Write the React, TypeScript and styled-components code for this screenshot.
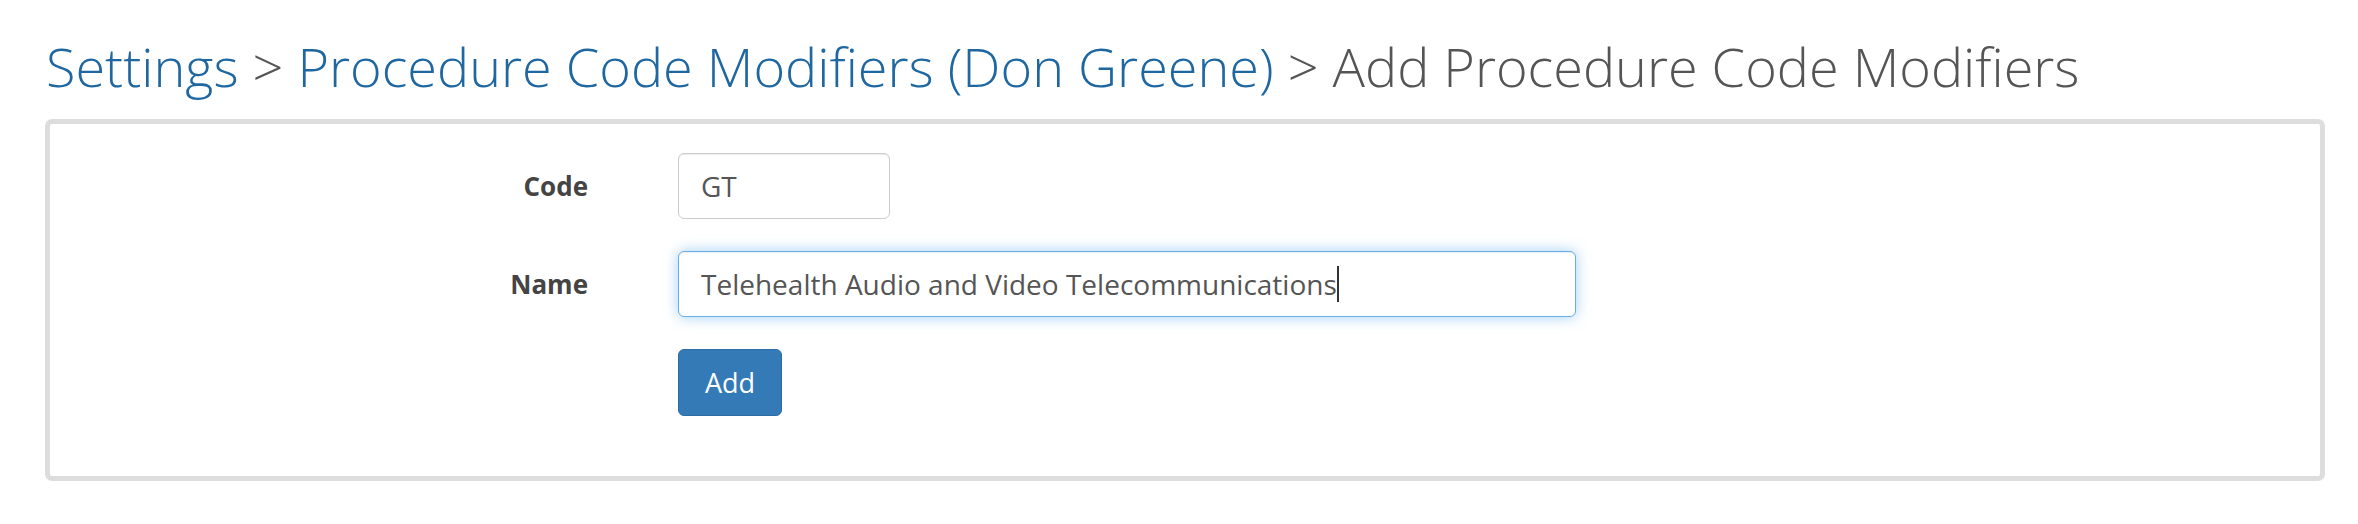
import React from 'react';
import styled, { createGlobalStyle } from 'styled-components';

const GlobalStyle = createGlobalStyle`
  html, body {
    margin: 0;
    padding: 0;
    background: #ffffff;
  }
  body {
    font-family: 'Open Sans', 'Liberation Sans', sans-serif;
    color: #444444;
  }
`;

const Page = styled.div`
  box-sizing: border-box;
  width: 2358px;
  padding: 0 33px 0 45px;
`;

const Title = styled.h1`
  margin: 36px 0 23px 1px;
  font-size: 54px;
  line-height: 60px;
  font-weight: 300;
  color: #555555;
  white-space: nowrap;
`;

const Crumb = styled.a`
  color: #1f67a0;
  text-decoration: none;
  cursor: pointer;
`;

const Panel = styled.div`
  box-sizing: border-box;
  border: 5px solid #dddddd;
  border-radius: 7px;
  padding: 29px 0 60px;
`;

const Form = styled.form`
  display: grid;
  grid-template-columns: 538px 1fr;
  column-gap: 90px;
  row-gap: 32px;
  align-items: center;
  margin: 0;
`;

const Label = styled.label`
  text-align: right;
  font-size: 26px;
  font-weight: 700;
  color: #444444;
  line-height: 1;
`;

const FieldWrap = styled.div<{ $width: number }>`
  position: relative;
  width: ${p => p.$width}px;
  height: 66px;
`;

const Input = styled.input<{ $focused?: boolean }>`
  box-sizing: border-box;
  width: 100%;
  height: 100%;
  padding: 0 22px;
  font-family: 'Open Sans', 'Liberation Sans', sans-serif;
  font-size: 28px;
  color: #555555;
  background: #ffffff;
  border: 1.5px solid ${p => (p.$focused ? '#66afe9' : '#cccccc')};
  border-radius: 6px;
  outline: none;
  caret-color: transparent;
  box-shadow: ${p =>
    p.$focused
      ? 'inset 0 1px 1px rgba(0,0,0,.075), 0 0 14px rgba(102,175,233,.6)'
      : 'inset 0 1px 1px rgba(0,0,0,.075)'};
`;

const CaretLayer = styled.div`
  position: absolute;
  inset: 0;
  display: flex;
  align-items: center;
  padding: 0 23.5px;
  pointer-events: none;
  font-size: 28px;
  white-space: pre;
`;

const Ghost = styled.span`
  visibility: hidden;
`;

const Caret = styled.span`
  display: inline-block;
  width: 1.5px;
  height: 36px;
  background: #333333;
`;

const Spacer = styled.div``;

const Button = styled.button`
  box-sizing: border-box;
  height: 67px;
  padding: 0 26px;
  font-family: 'Open Sans', 'Liberation Sans', sans-serif;
  font-size: 27px;
  color: #ffffff;
  background: #337ab7;
  border: 1.5px solid #2e6da4;
  border-radius: 6px;
  cursor: pointer;
`;

const nameValue = 'Telehealth Audio and Video Telecommunications';

export default function App() {
  return (
    <>
      <GlobalStyle />
      <Page>
        <Title>
          <Crumb>Settings</Crumb> &gt; <Crumb>Procedure Code Modifiers (Don Greene)</Crumb> &gt; Add
          Procedure Code Modifiers
        </Title>
        <Panel>
          <Form onSubmit={e => e.preventDefault()}>
            <Label htmlFor="code">Code</Label>
            <FieldWrap $width={212}>
              <Input id="code" defaultValue="GT" />
            </FieldWrap>
            <Label htmlFor="name">Name</Label>
            <FieldWrap $width={898}>
              <Input id="name" defaultValue={nameValue} $focused />
              <CaretLayer>
                <Ghost>{nameValue}</Ghost>
                <Caret />
              </CaretLayer>
            </FieldWrap>
            <Spacer />
            <div>
              <Button type="submit">Add</Button>
            </div>
          </Form>
        </Panel>
      </Page>
    </>
  );
}
